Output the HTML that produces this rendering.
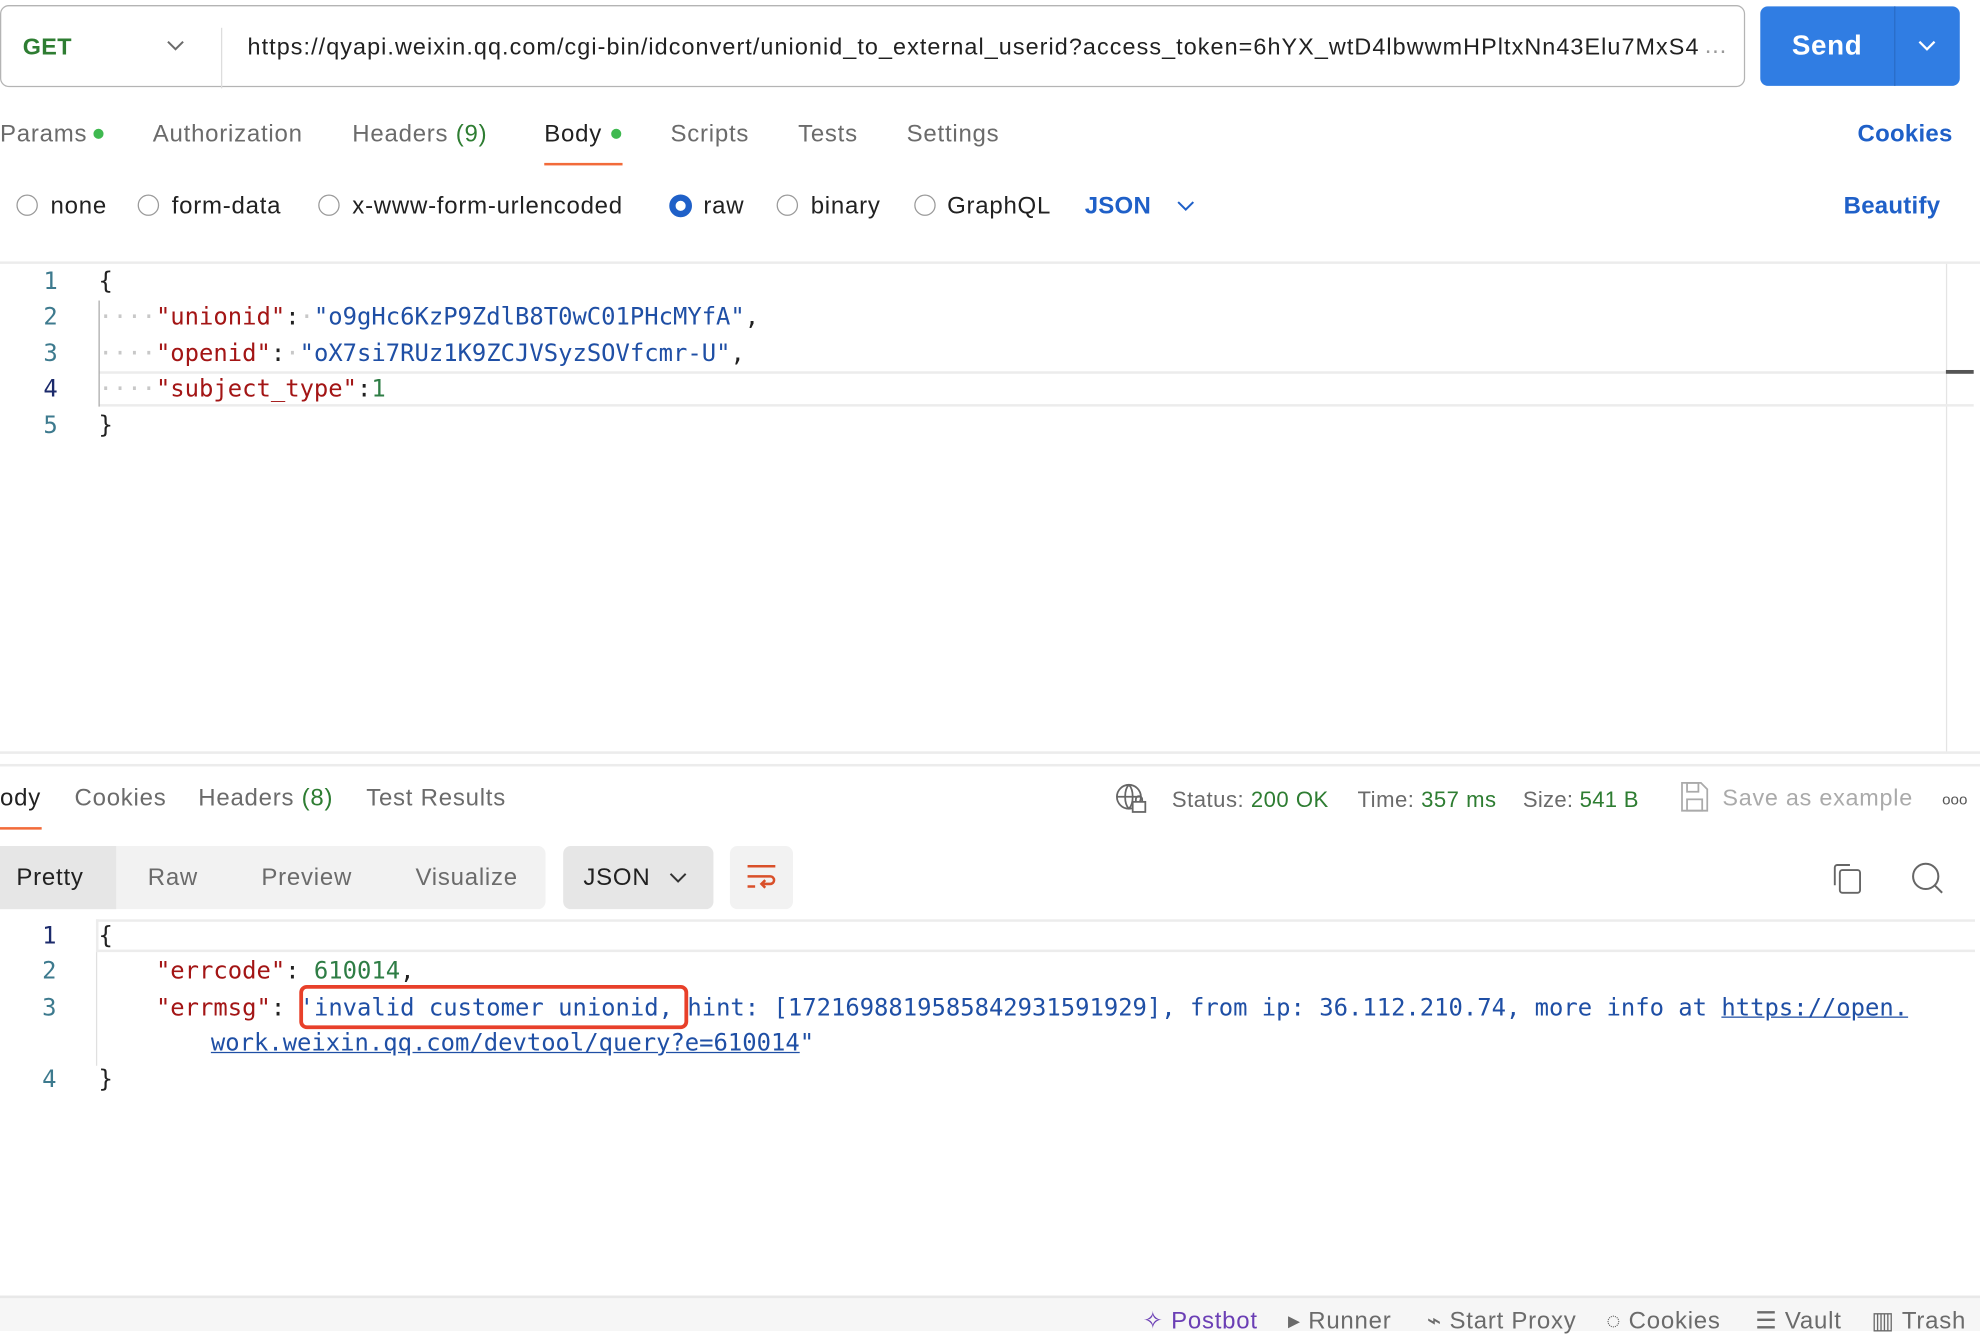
<!DOCTYPE html>
<html><head><meta charset="utf-8"><style>
html,body{margin:0;padding:0;background:#fff;overflow:hidden;width:1980px;height:1328px}
#w{position:absolute;left:0;top:0;width:1568px;height:1052px;transform:scale(1.26276);transform-origin:0 0;font-family:"Liberation Sans",sans-serif;color:#6b6b6b;font-size:19px;letter-spacing:0.6px}
.a{position:absolute;white-space:pre;line-height:24px;margin-top:1px}
.m{font-family:"DejaVu Sans Mono","Liberation Mono",monospace;font-size:18.9px;letter-spacing:0;line-height:24px;position:absolute;white-space:pre;color:#212121}
.k{color:#a31515}.s{color:#1f4fa5}.n{color:#2e7d45}.d{color:#c8c8c8}
.ln{position:absolute;width:30px;text-align:center;font-family:"DejaVu Sans Mono",monospace;font-size:18.9px;line-height:24px;color:#3d7a8e;letter-spacing:0}
.g{color:#2e7d32}.b{color:#1f60c8;font-weight:bold;letter-spacing:0.2px}
.rad{position:absolute;width:15px;height:15px;border:1.5px solid #9a9a9a;border-radius:50%}
.dot{position:absolute;width:8px;height:8px;border-radius:50%;background:#3fb950}
.f{position:absolute;white-space:pre;font-size:19px;line-height:24px;color:#6b6b6b}
</style></head><body><div id="w">
<!-- url bar -->
<div style="position:absolute;left:0;top:4px;width:1382px;height:65px;border:1.5px solid #b4b4b4;border-radius:7px;box-sizing:border-box"></div>
<div class="a" style="left:18px;top:24px;color:#2e7d32;font-weight:bold;font-size:18.5px;letter-spacing:0.3px">GET</div>
<svg style="position:absolute;left:131px;top:30px" width="16" height="12"><path d="M2 3l6 6 6-6" stroke="#6b6b6b" stroke-width="1.6" fill="none"/></svg>
<div style="position:absolute;left:175px;top:22px;width:1px;height:48px;background:#ddd"></div>
<div class="a" style="left:196px;top:24px;color:#212121;font-size:18.5px;letter-spacing:0.85px;width:1152px;overflow:hidden">https://qyapi.weixin.qq.com/cgi-bin/idconvert/unionid_to_external_userid?access_token=6hYX_wtD4lbwwmHPltxNn43Elu7MxS4</div>
<div class="a" style="left:1350px;top:24px;color:#999">...</div>
<div style="position:absolute;left:1394px;top:5px;width:158px;height:63px;background:#307de3;border-radius:6px"></div>
<div style="position:absolute;left:1500px;top:5px;width:1px;height:63px;background:#2a6cc6"></div>
<div class="a" style="left:1419px;top:23px;color:#fff;font-weight:bold;font-size:22px;letter-spacing:0.5px">Send</div>
<svg style="position:absolute;left:1518px;top:30px" width="16" height="12"><path d="M2 3l6 6 6-6" stroke="#fff" stroke-width="1.8" fill="none"/></svg>
<!-- tabs -->
<div class="a" style="left:0;top:94px">Params</div><div class="dot" style="left:74px;top:102px"></div>
<div class="a" style="left:121px;top:94px">Authorization</div>
<div class="a" style="left:279px;top:94px">Headers <span class="g">(9)</span></div>
<div class="a" style="left:431px;top:94px;color:#212121">Body</div><div class="dot" style="left:484px;top:102px"></div>
<div style="position:absolute;left:431px;top:129px;width:62px;height:2px;background:#f26b3a"></div>
<div class="a" style="left:531px;top:94px">Scripts</div>
<div class="a" style="left:632px;top:94px">Tests</div>
<div class="a" style="left:718px;top:94px">Settings</div>
<div class="a b" style="left:1471px;top:94px">Cookies</div>
<!-- radios -->
<div class="rad" style="left:13px;top:154px"></div><div class="a" style="left:40px;top:151px;color:#212121">none</div>
<div class="rad" style="left:109px;top:154px"></div><div class="a" style="left:136px;top:151px;color:#212121">form-data</div>
<div class="rad" style="left:252px;top:154px"></div><div class="a" style="left:279px;top:151px;color:#212121">x-www-form-urlencoded</div>
<div class="rad" style="left:530px;top:154px;border:5px solid #1f60c8;width:8px;height:8px"></div><div class="a" style="left:557px;top:151px;color:#212121">raw</div>
<div class="rad" style="left:615px;top:154px"></div><div class="a" style="left:642px;top:151px;color:#212121">binary</div>
<div class="rad" style="left:724px;top:154px"></div><div class="a" style="left:750px;top:151px;color:#212121">GraphQL</div>
<div class="a b" style="left:859px;top:151px">JSON</div>
<svg style="position:absolute;left:931px;top:157px" width="16" height="12"><path d="M2 3l6 6 6-6" stroke="#1f60c8" stroke-width="1.6" fill="none"/></svg>
<div class="a b" style="left:1460px;top:151px">Beautify</div>
<!-- request editor -->
<div style="position:absolute;left:0;top:207px;width:1568px;height:2px;background:#ececec"></div>
<div style="position:absolute;left:1541px;top:209px;width:1px;height:387px;background:#e4e4e4"></div>
<div style="position:absolute;left:78px;top:294px;width:1485px;height:28px;border-top:2px solid #ececec;border-bottom:2px solid #ececec;box-sizing:border-box"></div>
<div style="position:absolute;left:1541px;top:293px;width:22px;height:3px;background:#555"></div>
<div style="position:absolute;left:78px;top:238px;width:1px;height:84px;background:#aaa"></div>
<div class="ln" style="left:25px;top:211px">1</div>
<div class="ln" style="left:25px;top:239px">2</div>
<div class="ln" style="left:25px;top:268px">3</div>
<div class="ln" style="left:25px;top:296px;color:#1b2a6b">4</div>
<div class="ln" style="left:25px;top:325px">5</div>
<div class="m" style="left:78px;top:211px">{</div>
<div class="m" style="left:78px;top:239px"><span class="d">····</span><span class="k">"unionid"</span>:<span class="d">·</span><span class="s">"o9gHc6KzP9ZdlB8T0wC01PHcMYfA"</span>,</div>
<div class="m" style="left:78px;top:268px"><span class="d">····</span><span class="k">"openid"</span>:<span class="d">·</span><span class="s">"oX7si7RUz1K9ZCJVSyzSOVfcmr-U"</span>,</div>
<div class="m" style="left:78px;top:296px"><span class="d">····</span><span class="k">"subject_type"</span>:<span class="n">1</span></div>
<div class="m" style="left:78px;top:325px">}</div>
<div style="position:absolute;left:0;top:595px;width:1568px;height:2px;background:#ececec"></div>
<div style="position:absolute;left:0;top:605px;width:1568px;height:2px;background:#ececec"></div>
<!-- response tabs -->
<div class="a" style="left:0;top:620px;color:#212121">ody</div>
<div style="position:absolute;left:0;top:655px;width:33px;height:2px;background:#f26b3a"></div>
<div class="a" style="left:59px;top:620px">Cookies</div>
<div class="a" style="left:157px;top:620px">Headers <span class="g">(8)</span></div>
<div class="a" style="left:290px;top:620px">Test Results</div>
<svg style="position:absolute;left:883px;top:620px" width="26" height="26" fill="none" stroke="#666" stroke-width="1.4"><circle cx="11" cy="11" r="9.5"/><path d="M1.5 11h19M11 1.5c-4 4-4 15 0 19M11 1.5c4 4 4 15 0 19"/><rect x="14" y="15" width="10" height="8" fill="#fff"/><path d="M16.5 15v-2a2.5 2.5 0 015 0v2"/></svg>
<div class="a" style="left:928px;top:620px;font-size:17.5px;letter-spacing:0.4px">Status: <span class="g">200 OK</span></div>
<div class="a" style="left:1075px;top:620px;font-size:17.5px;letter-spacing:0.4px">Time: <span class="g">357 ms</span></div>
<div class="a" style="left:1206px;top:620px;font-size:17.5px;letter-spacing:0.2px">Size: <span class="g">541 B</span></div>
<svg style="position:absolute;left:1330px;top:618px" width="24" height="26" fill="none" stroke="#aaa" stroke-width="1.4"><path d="M2 2h15l5 5v17H2z"/><rect x="6" y="2" width="9" height="7"/><rect x="6" y="15" width="12" height="9"/></svg>
<div class="a" style="left:1364px;top:619px;color:#aaa;font-size:18.5px">Save as example</div>
<div class="a" style="left:1538px;top:620px;color:#555;font-size:12px;letter-spacing:0">ooo</div>
<!-- toolbar -->
<div style="position:absolute;left:0;top:670px;width:432px;height:50px;background:#f2f2f2;border-radius:0 6px 6px 0"></div>
<div style="position:absolute;left:0;top:670px;width:92px;height:50px;background:#e6e6e6"></div>
<div class="a" style="left:13px;top:683px;color:#212121">Pretty</div>
<div class="a" style="left:117px;top:683px">Raw</div>
<div class="a" style="left:207px;top:683px">Preview</div>
<div class="a" style="left:329px;top:683px">Visualize</div>
<div style="position:absolute;left:446px;top:670px;width:119px;height:50px;background:#e6e6e6;border-radius:6px"></div>
<div class="a" style="left:462px;top:683px;color:#212121">JSON</div>
<svg style="position:absolute;left:529px;top:689px" width="16" height="12"><path d="M2 3l6 6 6-6" stroke="#333" stroke-width="1.6" fill="none"/></svg>
<div style="position:absolute;left:578px;top:670px;width:50px;height:50px;background:#f2f2f2;border-radius:6px"></div>
<svg style="position:absolute;left:590px;top:683px" width="26" height="26" fill="none" stroke="#d9502a" stroke-width="2"><path d="M2 3h22M2 11h18a3 3 0 010 6h-6M2 19h6M16 14l-3 3 3 3"/></svg>
<svg style="position:absolute;left:1451px;top:683px" width="26" height="26" fill="none" stroke="#666" stroke-width="1.5"><path d="M2 18V4a2 2 0 012-2h10"/><rect x="6" y="6" width="16" height="18" rx="2"/></svg>
<svg style="position:absolute;left:1513px;top:682px" width="28" height="28" fill="none" stroke="#666" stroke-width="1.6"><circle cx="12" cy="12" r="10"/><path d="M19 19l6 6"/></svg>
<!-- response editor -->
<div style="position:absolute;left:76px;top:728px;width:1488px;height:26px;border:2px solid #ececec;border-right:none;box-sizing:border-box"></div>
<div style="position:absolute;left:76px;top:754px;width:1px;height:90px;background:#e0e0e0"></div>
<div class="ln" style="left:24px;top:729px;color:#1b2a6b">1</div>
<div class="ln" style="left:24px;top:757px">2</div>
<div class="ln" style="left:24px;top:786px">3</div>
<div class="ln" style="left:24px;top:843px">4</div>
<div class="m" style="left:78px;top:729px">{</div>
<div class="m" style="left:78px;top:757px">    <span class="k">"errcode"</span>: <span class="n">610014</span>,</div>
<div class="m" style="left:78px;top:786px">    <span class="k">"errmsg"</span>: <span class="s">'invalid customer unionid, hint: [1721698819585842931591929], from ip: 36.112.210.74, more info at <u>https://open.</u></span></div>
<div class="m s" style="left:167px;top:814px"><u>work.weixin.qq.com/devtool/query?e=610014</u>"</div>
<div class="m" style="left:78px;top:843px">}</div>
<div style="position:absolute;left:237px;top:780px;width:308px;height:35px;border:3px solid #e8402a;border-radius:6px;box-sizing:border-box"></div>
<!-- footer -->
<div style="position:absolute;left:0;top:1026px;width:1568px;height:26px;background:#f6f6f6;border-top:2px solid #e8e8e8"></div>
<div class="f" style="left:905px;top:1035px;color:#6b3fb5">✧ Postbot</div>
<div class="f" style="left:1020px;top:1035px">▸ Runner</div>
<div class="f" style="left:1130px;top:1035px">⌁ Start Proxy</div>
<div class="f" style="left:1272px;top:1035px">◌ Cookies</div>
<div class="f" style="left:1390px;top:1035px">☰ Vault</div>
<div class="f" style="left:1482px;top:1035px">▥ Trash</div>
</div></body></html>
